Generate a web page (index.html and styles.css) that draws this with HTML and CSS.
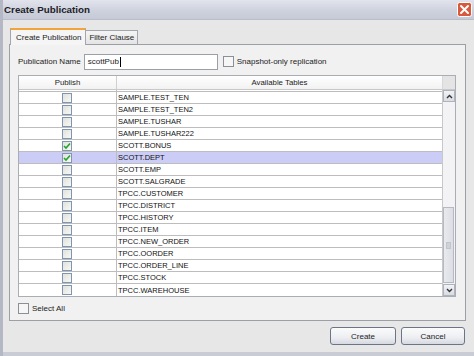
FILE: index.html
```html
<!DOCTYPE html>
<html>
<head>
<meta charset="utf-8">
<link rel="stylesheet" href="styles.css">
</head>
<body>
<div class="window">
  <div class="titlebar">
    <span class="title">Create Publication</span>
    <span class="close"><svg width="15" height="15" viewBox="0 0 15 15"><rect x="0.5" y="0.5" width="14" height="14" rx="2" fill="#d9593c" stroke="#ffffff" stroke-width="1"/><path d="M4 4 L11 11 M11 4 L4 11" stroke="#fff" stroke-width="2" stroke-linecap="round"/></svg></span>
  </div>
  <div class="content">
    <div class="tabs">
      <div class="tab active">Create Publication</div>
      <div class="tab">Filter Clause</div>
    </div>
    <div class="panel">
      <div class="name-row">
        <label class="lbl">Publication Name</label>
        <div class="input">scottPub<span class="caret"></span></div>
        <span class="cb"></span>
        <span class="lbl">Snapshot-only replication</span>
      </div>
      <div class="table">
        <div class="thead">
          <div class="th c1">Publish</div>
          <div class="th c2">Available Tables</div>
          <div class="th c3"></div>
        </div>
        <div class="tbody">
          <div class="rows">
            <div class="row partial"><div class="c1"></div><div class="c2"></div></div>
            <div class="row"><div class="c1"><span class="cb"></span></div><div class="c2">SAMPLE.TEST_TEN</div></div>
            <div class="row"><div class="c1"><span class="cb"></span></div><div class="c2">SAMPLE.TEST_TEN2</div></div>
            <div class="row"><div class="c1"><span class="cb"></span></div><div class="c2">SAMPLE.TUSHAR</div></div>
            <div class="row"><div class="c1"><span class="cb"></span></div><div class="c2">SAMPLE.TUSHAR222</div></div>
            <div class="row"><div class="c1"><span class="cb checked"><svg width="8" height="8" viewBox="0 0 8 8"><path d="M1 4 L3 6 L7 1.5" fill="none" stroke="#22a52a" stroke-width="1.6"/></svg></span></div><div class="c2">SCOTT.BONUS</div></div>
            <div class="row sel"><div class="c1"><span class="cb checked"><svg width="8" height="8" viewBox="0 0 8 8"><path d="M1 4 L3 6 L7 1.5" fill="none" stroke="#22a52a" stroke-width="1.6"/></svg></span></div><div class="c2">SCOTT.DEPT</div></div>
            <div class="row"><div class="c1"><span class="cb"></span></div><div class="c2">SCOTT.EMP</div></div>
            <div class="row"><div class="c1"><span class="cb"></span></div><div class="c2">SCOTT.SALGRADE</div></div>
            <div class="row"><div class="c1"><span class="cb"></span></div><div class="c2">TPCC.CUSTOMER</div></div>
            <div class="row"><div class="c1"><span class="cb"></span></div><div class="c2">TPCC.DISTRICT</div></div>
            <div class="row"><div class="c1"><span class="cb"></span></div><div class="c2">TPCC.HISTORY</div></div>
            <div class="row"><div class="c1"><span class="cb"></span></div><div class="c2">TPCC.ITEM</div></div>
            <div class="row"><div class="c1"><span class="cb"></span></div><div class="c2">TPCC.NEW_ORDER</div></div>
            <div class="row"><div class="c1"><span class="cb"></span></div><div class="c2">TPCC.OORDER</div></div>
            <div class="row"><div class="c1"><span class="cb"></span></div><div class="c2">TPCC.ORDER_LINE</div></div>
            <div class="row"><div class="c1"><span class="cb"></span></div><div class="c2">TPCC.STOCK</div></div>
            <div class="row last"><div class="c1"><span class="cb"></span></div><div class="c2">TPCC.WAREHOUSE</div></div>
          </div>
          <div class="scrollbar">
            <div class="sbtn"><svg width="7" height="5" viewBox="0 0 7 5"><path d="M1 4 L3.5 1.5 L6 4" fill="none" stroke="#333" stroke-width="1.4"/></svg></div>
            <div class="track">
              <div class="thumb"><span class="grip"></span></div>
            </div>
            <div class="sbtn"><svg width="7" height="5" viewBox="0 0 7 5"><path d="M1 1 L3.5 3.5 L6 1" fill="none" stroke="#333" stroke-width="1.4"/></svg></div>
          </div>
        </div>
      </div>
      <div class="selall">
        <span class="cb big"></span>
        <span class="lbl">Select All</span>
      </div>
    </div>
    <div class="buttons">
      <button class="btn">Create</button>
      <button class="btn">Cancel</button>
    </div>
  </div>
  <div class="bottombar"></div>
</div>
</body>
</html>
```
FILE: styles.css
```css
* { box-sizing: border-box; }
html, body { margin: 0; padding: 0; }
body {
  width: 474px;
  height: 356px;
  overflow: hidden;
  font-family: "Liberation Sans", Arial, sans-serif;
  font-size: 8px;
  color: #1c1c1c;
  background: #e7e7e7;
}
.window {
  width: 474px;
  height: 356px;
  display: flex;
  flex-direction: column;
  border-left: 3px solid #b4b8c4;
}
.titlebar {
  height: 20px;
  flex: none;
  display: flex;
  align-items: center;
  justify-content: space-between;
  padding: 0 2px 0 1px;
  background: linear-gradient(#e2e4ec, #cdd1dd 60%, #c6cad8);
  border-bottom: 1px solid #b9bdc9;
}
.title {
  font-weight: bold;
  font-size: 9.8px;
  color: #1d1d26;
}
.close { display: flex; }
.content {
  flex: 1;
  display: flex;
  flex-direction: column;
  padding: 7px 8px 0 6px;
}
.tabs {
  display: flex;
  align-items: flex-end;
  padding-left: 1px;
  height: 17px;
}
.tab {
  height: 14px;
  padding: 0 3px;
  display: flex;
  align-items: center;
  white-space: nowrap;
  border: 1px solid #a3a7ad;
  border-bottom: none;
  background: linear-gradient(#f4f4f4, #e4e4e4);
  margin-left: -1px;
}
.tab.active {
  height: 17px;
  padding: 0 4px 0 5px;
  margin-left: 0;
  background: #f5f5f5;
  border-top: 2px solid #f2a33a;
  position: relative;
  z-index: 1;
  margin-bottom: -1px;
}
.panel {
  height: 277px;
  border: 1px solid #9ca0a6;
  background: #f1f1f1;
  padding: 8px 9px 0 8px;
}
.name-row {
  display: flex;
  align-items: center;
  height: 17px;
}
.lbl { white-space: nowrap; }
.input {
  margin-left: 3px;
  width: 134px;
  height: 16px;
  border: 1px solid #9aa0a8;
  background: #fff;
  padding-left: 3px;
  display: flex;
  align-items: center;
}
.caret {
  display: inline-block;
  width: 1px;
  height: 10px;
  background: #000;
  margin-left: 1px;
}
.cb {
  display: inline-flex;
  align-items: center;
  justify-content: center;
  width: 10px;
  height: 10px;
  border: 1px solid #7f95b0;
  background: linear-gradient(135deg, #e0e0dc, #f8f8f6);
}
.name-row .cb {
  width: 11px;
  height: 11px;
  margin: 0 3px 0 5px;
  border-color: #8a8f98;
  background: #f6f6f6;
}
.table {
  margin-top: 5px;
  width: 438px;
  border: 1px solid #a9adb4;
  background: #fff;
}
.thead {
  display: flex;
  height: 14px;
  border-bottom: 1px solid #c8c8c8;
  font-size: 7.8px;
}
.th {
  display: flex;
  align-items: center;
  justify-content: center;
  background: linear-gradient(#ffffff, #f2f2f2);
}
.thead .c1 { width: 98px; border-right: 1px solid #d0d0d0; }
.thead .c2 { width: 325px; }
.thead .c3 { flex: 1; background: #e4e4e4; border-left: 1px solid #d8d8d8; }
.tbody {
  display: flex;
  font-size: 7.5px;
  color: #111;
}
.rows { width: 423px; }
.row {
  display: flex;
  height: 12px;
  border-bottom: 1px solid #bdbdbd;
}
.row.partial { height: 2px; }
.row.last { border-bottom: none; }
.row.sel { background: #cbcdf6; }
.row .c1 {
  width: 98px;
  display: flex;
  align-items: center;
  justify-content: center;
  border-right: 1px solid #bdbdbd;
}
.row .c1 .cb { margin-left: -1px; }
.row .c2 {
  flex: 1;
  display: flex;
  align-items: center;
  padding-left: 1px;
  white-space: nowrap;
}
.scrollbar {
  flex: 1;
  display: flex;
  flex-direction: column;
  background: #f3f3f5;
  border-left: 1px solid #c8c8c8;
}
.sbtn {
  height: 12px;
  display: flex;
  align-items: center;
  justify-content: center;
  background: linear-gradient(#f2f3f6, #d9dce3);
  border: 1px solid #aeb3bd;
}
.track {
  flex: 1;
  display: flex;
  flex-direction: column;
  justify-content: flex-end;
  padding: 0 1px 1px 0;
}
.thumb {
  height: 76px;
  border: 1px solid #b5b9c2;
  background: linear-gradient(90deg, #e9eaee, #dcdee4);
  display: flex;
  align-items: center;
  justify-content: center;
}
.grip {
  width: 5px;
  height: 7px;
  background: #cfd2d8;
  border: 1px solid #c2c5cc;
}
.selall {
  display: flex;
  align-items: center;
  margin-top: 5px;
  height: 12px;
}
.cb.big {
  width: 11px;
  height: 11px;
  border-color: #8a8f98;
  background: #f6f6f6;
  margin-right: 3px;
}
.buttons {
  display: flex;
  justify-content: flex-end;
  gap: 5px;
  padding-top: 6px;
  padding-right: 1px;
}
.btn {
  width: 66px;
  height: 18px;
  font-family: "Liberation Sans", Arial, sans-serif;
  font-size: 8px;
  color: #1c1c1c;
  border: 1px solid #6c7586;
  border-radius: 3px;
  background: linear-gradient(#fbfbfc, #eceef2 60%, #d6d9e0);
  padding: 0;
}
.btn + .btn { width: 64px; }
.bottombar {
  height: 4px;
  flex: none;
  margin-top: auto;
  background: #c9ccd4;
}
```
